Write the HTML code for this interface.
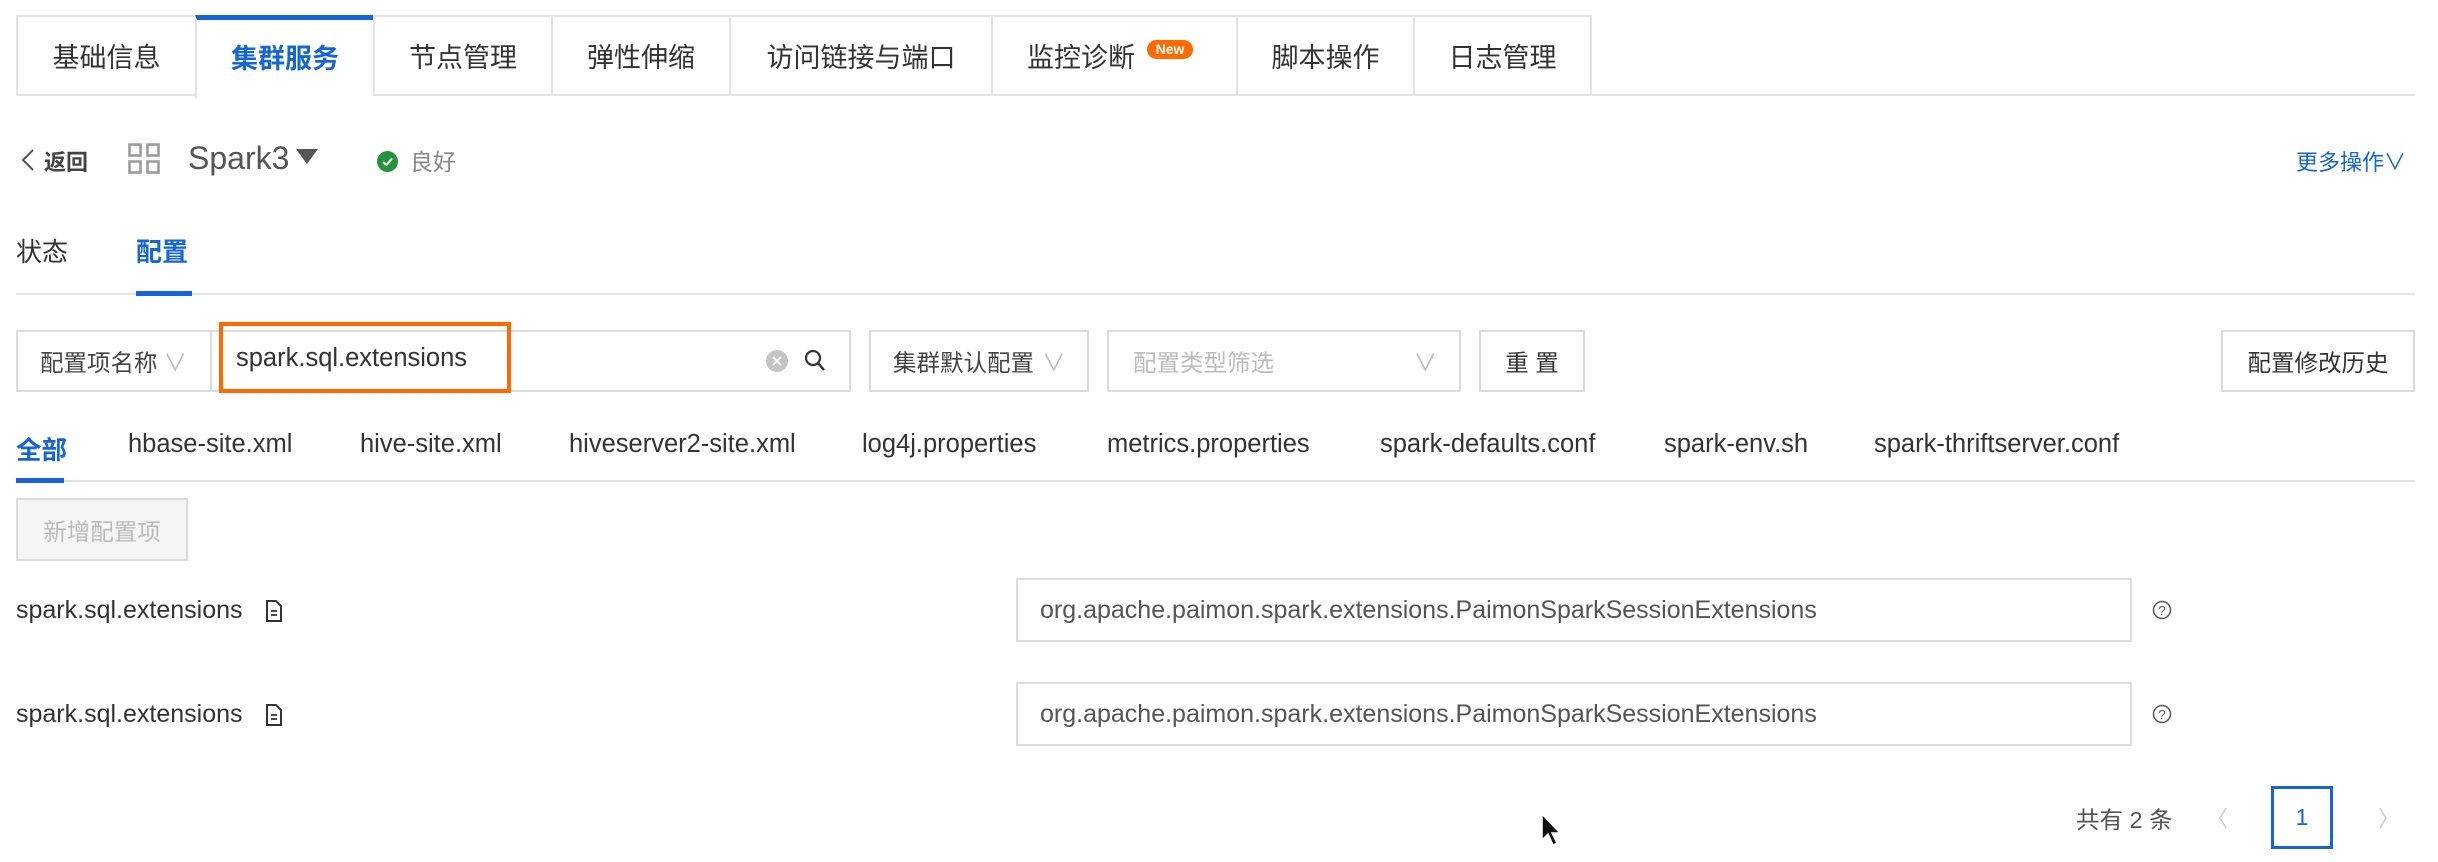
<!DOCTYPE html>
<html><head><meta charset="utf-8"><style>
*{box-sizing:border-box;margin:0;padding:0}
body{width:2438px;height:862px;background:#fff;font-family:"Liberation Sans","Noto Sans CJK SC",sans-serif;color:#333;position:relative;overflow:hidden}
.a{position:absolute;white-space:nowrap}
.tab{position:absolute;top:15px;height:81px;border:2px solid #e3e3e6;border-right:none;font-size:27px;color:#333;display:flex;align-items:center;justify-content:center;background:#fff}
.box{position:absolute;border:2px solid #dcdcdf;background:#fff;display:flex;align-items:center}
.st{position:absolute;top:430px;font-size:25.5px;color:#333}
</style></head><body>
<div class="a" style="left:16px;top:94px;width:2399px;height:2px;background:#e3e3e6"></div>
<div class="tab" style="left:16px;width:179px">基础信息</div>
<div class="tab" style="left:195px;width:178px;border-top:5px solid #1565d8;height:83px;border-bottom:none;color:#1565d8;font-weight:bold;padding-bottom:6px">集群服务</div>
<div class="tab" style="left:373px;width:178px">节点管理</div>
<div class="tab" style="left:551px;width:178px">弹性伸缩</div>
<div class="tab" style="left:729px;width:262px">访问链接与端口</div>
<div class="tab" style="left:991px;width:245px;justify-content:flex-start;padding-left:34px">监控诊断</div>
<div class="a" style="left:1147px;top:40px;width:46px;height:19px;border-radius:10px;background:#ff6a00;color:#fff;font-size:14px;font-weight:bold;text-align:center;line-height:19px">New</div>
<div class="tab" style="left:1236px;width:177px">脚本操作</div>
<div class="tab" style="left:1413px;width:179px;border-right:2px solid #e3e3e6">日志管理</div>

<svg class="a" style="left:18px;top:147px" width="20" height="26" viewBox="0 0 20 26"><path d="M15 3 L5 13 L15 23" fill="none" stroke="#555" stroke-width="2"/></svg>
<div class="a" style="left:44px;top:145px;font-size:22px;font-weight:bold;color:#444">返回</div>
<svg class="a" style="left:128px;top:143px" width="32" height="31" viewBox="0 0 32 31"><g fill="none" stroke="#999" stroke-width="2.5"><rect x="1.5" y="1.5" width="11" height="11"/><rect x="19.5" y="1.5" width="11" height="11"/><rect x="1.5" y="18.5" width="11" height="11"/><rect x="19.5" y="18.5" width="11" height="11"/></g></svg>
<div class="a" style="left:188px;top:140px;font-size:32px;color:#555">Spark3</div>
<svg class="a" style="left:296px;top:149px" width="22" height="16"><path d="M0 0 H22 L11 15 Z" fill="#555"/></svg>
<svg class="a" style="left:377px;top:151px" width="21" height="21"><circle cx="10.5" cy="10.5" r="10.5" fill="#23943b"/><path d="M6 11 L9.5 14 L15 7.5" fill="none" stroke="#fff" stroke-width="2"/></svg>
<div class="a" style="left:410px;top:143px;font-size:23px;color:#888">良好</div>
<div class="a" style="left:2296px;top:145px;font-size:22px;color:#1565d8">更多操作∨</div>

<div class="a" style="left:16px;top:232px;font-size:26px;color:#333">状态</div>
<div class="a" style="left:136px;top:232px;font-size:26px;color:#1565d8;font-weight:bold">配置</div>
<div class="a" style="left:16px;top:293px;width:2399px;height:2px;background:#e3e3e6"></div>
<div class="a" style="left:136px;top:291px;width:56px;height:5px;background:#1565d8"></div>

<div class="box" style="left:16px;top:330px;width:196px;height:62px;padding-left:22px;font-size:23.5px;color:#444">配置项名称 <span style="color:#bbb;margin-left:6px">∨</span></div>
<div class="box" style="left:210px;top:330px;width:641px;height:62px"></div>
<div class="a" style="left:219px;top:322px;width:292px;height:71px;border:4px solid #ff6a00"></div>
<div class="a" style="left:236px;top:344px;font-size:25.5px;color:#333">spark.sql.extensions</div>
<svg class="a" style="left:765px;top:349px" width="24" height="24"><circle cx="12" cy="12" r="11" fill="#c4c4c4"/><path d="M8 8 L16 16 M16 8 L8 16" stroke="#fff" stroke-width="1.8"/></svg>
<svg class="a" style="left:804px;top:349px" width="22" height="24"><circle cx="9" cy="9" r="7" fill="none" stroke="#333" stroke-width="2.2"/><path d="M14 14 L20 21" stroke="#333" stroke-width="2.4"/></svg>
<div class="box" style="left:869px;top:330px;width:220px;height:62px;padding-left:22px;font-size:23.5px;color:#444">集群默认配置 <span style="color:#bbb;margin-left:8px">∨</span></div>
<div class="box" style="left:1107px;top:330px;width:354px;height:62px;padding-left:24px;font-size:23.5px;color:#bbb">配置类型筛选<span style="margin-left:auto;margin-right:22px">∨</span></div>
<div class="box" style="left:1479px;top:330px;width:106px;height:62px;justify-content:center;font-size:23.5px;color:#333">重 置</div>
<div class="box" style="left:2221px;top:330px;width:194px;height:62px;justify-content:center;font-size:23.5px;color:#333">配置修改历史</div>

<div class="st" style="left:16px;color:#1565d8;font-weight:bold">全部</div>
<div class="st" style="left:128px">hbase-site.xml</div>
<div class="st" style="left:360px">hive-site.xml</div>
<div class="st" style="left:569px">hiveserver2-site.xml</div>
<div class="st" style="left:862px">log4j.properties</div>
<div class="st" style="left:1107px">metrics.properties</div>
<div class="st" style="left:1380px">spark-defaults.conf</div>
<div class="st" style="left:1664px">spark-env.sh</div>
<div class="st" style="left:1874px">spark-thriftserver.conf</div>
<div class="a" style="left:16px;top:480px;width:2399px;height:2px;background:#e3e3e6"></div>
<div class="a" style="left:16px;top:478px;width:48px;height:5px;background:#1565d8"></div>

<div class="box" style="left:16px;top:498px;width:172px;height:63px;justify-content:center;background:#f5f5f5;font-size:23.5px;color:#bbb">新增配置项</div>

<div class="a" style="left:16px;top:596px;font-size:25px;color:#333">spark.sql.extensions</div>
<svg class="a" style="left:265px;top:599px" width="18" height="24"><path d="M2 2 H11 L16 7 V22 H2 Z" fill="none" stroke="#333" stroke-width="2"/><path d="M6 12 H12 M6 16 H12" stroke="#333" stroke-width="1.8"/></svg>
<div class="box" style="left:1016px;top:578px;width:1116px;height:64px;padding-left:22px;font-size:25px;color:#555">org.apache.paimon.spark.extensions.PaimonSparkSessionExtensions</div>
<svg class="a" style="left:2152px;top:600px" width="20" height="20"><circle cx="10" cy="10" r="8.5" fill="none" stroke="#555" stroke-width="1.5"/><text x="10" y="15" font-size="13" text-anchor="middle" fill="#555" font-family="Liberation Sans">?</text></svg>

<div class="a" style="left:16px;top:700px;font-size:25px;color:#333">spark.sql.extensions</div>
<svg class="a" style="left:265px;top:703px" width="18" height="24"><path d="M2 2 H11 L16 7 V22 H2 Z" fill="none" stroke="#333" stroke-width="2"/><path d="M6 12 H12 M6 16 H12" stroke="#333" stroke-width="1.8"/></svg>
<div class="box" style="left:1016px;top:682px;width:1116px;height:64px;padding-left:22px;font-size:25px;color:#555">org.apache.paimon.spark.extensions.PaimonSparkSessionExtensions</div>
<svg class="a" style="left:2152px;top:704px" width="20" height="20"><circle cx="10" cy="10" r="8.5" fill="none" stroke="#555" stroke-width="1.5"/><text x="10" y="15" font-size="13" text-anchor="middle" fill="#555" font-family="Liberation Sans">?</text></svg>

<div class="a" style="left:2076px;top:801px;font-size:23.5px;color:#555">共有 2 条</div>
<svg class="a" style="left:2216px;top:806px" width="14" height="24"><path d="M10 2 L4 12 L10 22" fill="none" stroke="#ccc" stroke-width="1.5"/></svg>
<div class="a" style="left:2271px;top:786px;width:62px;height:63px;border:3px solid #1565d8;color:#1565d8;font-size:23px;text-align:center;line-height:57px">1</div>
<svg class="a" style="left:2376px;top:806px" width="14" height="24"><path d="M4 2 L10 12 L4 22" fill="none" stroke="#ccc" stroke-width="1.5"/></svg>
<svg class="a" style="left:1540px;top:812px" width="24" height="36"><path d="M2 2 L2 28 L8 22 L13 33 L17 31 L12 21 L20 21 Z" fill="#111" stroke="#fff" stroke-width="1.5"/></svg>
</body></html>
